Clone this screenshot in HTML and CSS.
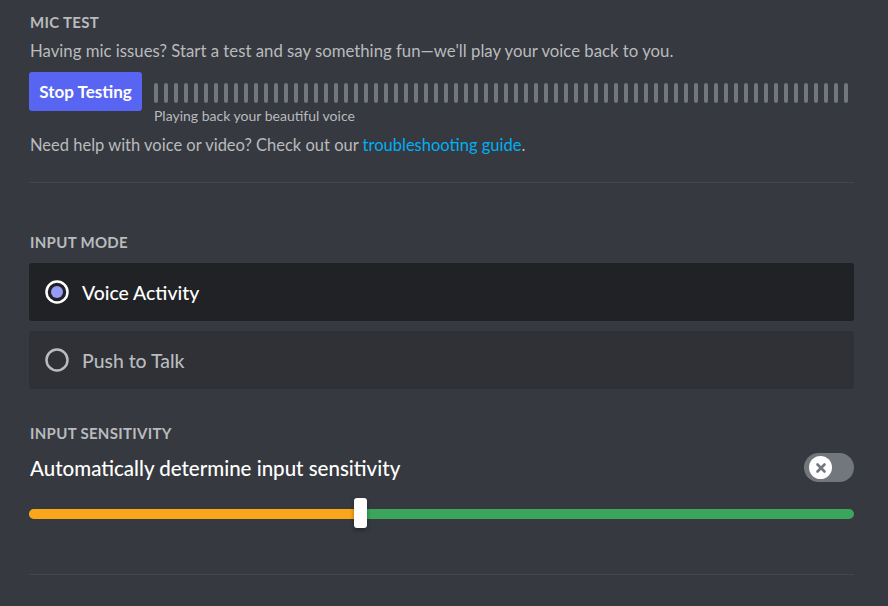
FILE: index.html
```html
<!DOCTYPE html>
<html>
<head>
<meta charset="utf-8">
<link rel="stylesheet" href="styles.css">
</head>
<body>
<main class="page">
  <section class="section mic">
    <h2 class="title">Mic Test</h2>
    <p class="desc">Having mic issues? Start a test and say something fun—we'll play your voice back to you.</p>
    <div class="test-row">
      <button class="btn">Stop Testing</button>
      <div class="meter">
        <div class="bars">
          <span></span><span></span><span></span><span></span><span></span><span></span><span></span><span></span><span></span><span></span>
          <span></span><span></span><span></span><span></span><span></span><span></span><span></span><span></span><span></span><span></span>
          <span></span><span></span><span></span><span></span><span></span><span></span><span></span><span></span><span></span><span></span>
          <span></span><span></span><span></span><span></span><span></span><span></span><span></span><span></span><span></span><span></span>
          <span></span><span></span><span></span><span></span><span></span><span></span><span></span><span></span><span></span><span></span>
          <span></span><span></span><span></span><span></span><span></span><span></span><span></span><span></span><span></span><span></span>
          <span></span><span></span><span></span><span></span><span></span><span></span><span></span><span></span><span></span><span></span>
        </div>
        <div class="meter-label">Playing back your beautiful voice</div>
      </div>
    </div>
    <p class="help">Need help with voice or video? Check out our <a href="#" class="link">troubleshooting guide</a>.</p>
  </section>
  <div class="divider"></div>

  <section class="section mode">
    <h2 class="title">Input Mode</h2>
    <div class="radio-item selected">
      <svg class="radio" width="24" height="24" viewBox="0 0 24 24"><circle cx="12" cy="12" r="10.5" fill="none" stroke="#ffffff" stroke-width="2.5"/><circle cx="12" cy="12" r="6" fill="#949cf7"/></svg>
      <span class="radio-label">Voice Activity</span>
    </div>
    <div class="radio-item">
      <svg class="radio" width="24" height="24" viewBox="0 0 24 24"><circle cx="12" cy="12" r="10.5" fill="none" stroke="#b9bbbe" stroke-width="2.5"/></svg>
      <span class="radio-label">Push to Talk</span>
    </div>
  </section>

  <section class="section sens">
    <h2 class="title">Input Sensitivity</h2>
    <div class="auto-row">
      <span class="auto-label">Automatically determine input sensitivity</span>
      <div class="toggle">
        <div class="knob">
          <svg width="14" height="14" viewBox="0 0 14 14"><path d="M3.5 3.5 L10.5 10.5 M10.5 3.5 L3.5 10.5" stroke="#72767d" stroke-width="2.6" stroke-linecap="round"/></svg>
        </div>
      </div>
    </div>
    <div class="slider">
      <div class="track">
        <div class="fill" style="width: 40%"></div>
      </div>
      <div class="thumb" style="left: 40%"></div>
    </div>
  </section>
  <div class="divider bottom"></div>
</main>
</body>
</html>
```

FILE: styles.css
```css
* { box-sizing: border-box; }
html, body {
  margin: 0;
  padding: 0;
  background: #36393f;
}
body {
  font-family: Lato, "Noto Sans", sans-serif;
  color: #b9bbbe;
}
.page {
  width: 825px;
  margin-left: 29px;
  padding-top: 12px;
}
.title {
  margin: 0;
  font-size: 15px;
  line-height: 20px;
  font-weight: 700;
  text-transform: uppercase;
  letter-spacing: 0.02em;
  color: #b9bbbe;
  padding-left: 1px;
}
.desc {
  margin: 8px 0 0;
  font-size: 16.75px;
  line-height: 22px;
  padding-left: 1px;
}
.test-row {
  display: flex;
  align-items: flex-start;
  gap: 12px;
  margin-top: 10px;
}
.btn {
  width: 113px;
  height: 39px;
  border: none;
  border-radius: 3px;
  background: #5865f2;
  color: #ffffff;
  font-family: inherit;
  font-size: 17px;
  font-weight: 700;
  padding: 0;
}
.meter {
  margin-top: 11px;
}
.bars {
  display: flex;
  gap: 6px;
  height: 20px;
}
.bars span {
  width: 4px;
  height: 20px;
  border-radius: 2px;
  background: #72767d;
}
.meter-label {
  margin-top: 4px;
  font-size: 14px;
  line-height: 18px;
  color: #b9bbbe;
}
.help {
  margin: 9px 0 0;
  font-size: 16.5px;
  line-height: 22px;
  padding-left: 1px;
}
.link {
  color: #00aff4;
  text-decoration: none;
}
.divider {
  height: 1px;
  background: #42454a;
  margin-top: 26px;
}
.mode {
  margin-top: 49px;
}
.radio-item {
  display: flex;
  align-items: center;
  gap: 13px;
  height: 58px;
  padding-left: 16px;
  border-radius: 3px;
  background: #2f3136;
  margin-top: 10px;
}
.title + .radio-item {
  margin-top: 11px;
}
.radio-item.selected {
  background: #202225;
}
.radio-label {
  font-size: 19.4px;
  font-weight: 500;
  color: #b9bbbe;
}
.selected .radio-label {
  color: #ffffff;
}
.sens {
  margin-top: 34px;
}
.auto-row {
  display: flex;
  align-items: center;
  justify-content: space-between;
  margin-top: 10px;
}
.auto-label {
  font-size: 20.5px;
  font-weight: 500;
  color: #ffffff;
  padding-left: 1px;
}
.toggle {
  width: 50px;
  height: 29px;
  border-radius: 15px;
  background: #72767d;
  padding: 3px 4px 3px 5px;
}
.knob {
  width: 23px;
  height: 23px;
  border-radius: 50%;
  background: #ffffff;
  display: flex;
  align-items: center;
  justify-content: center;
}
.slider {
  position: relative;
  height: 30px;
  margin-top: 16px;
}
.track {
  position: absolute;
  left: 0;
  right: 0;
  top: 11px;
  height: 10px;
  border-radius: 5px;
  background: #3ba55c;
  overflow: hidden;
}
.fill {
  height: 100%;
  background: #faa61a;
}
.thumb {
  position: absolute;
  top: 0;
  width: 13px;
  height: 30px;
  margin-left: -5px;
  border-radius: 3px;
  background: #ffffff;
  box-shadow: 0 2px 4px rgba(0,0,0,0.35);
}
.divider.bottom {
  margin-top: 46px;
}
```
